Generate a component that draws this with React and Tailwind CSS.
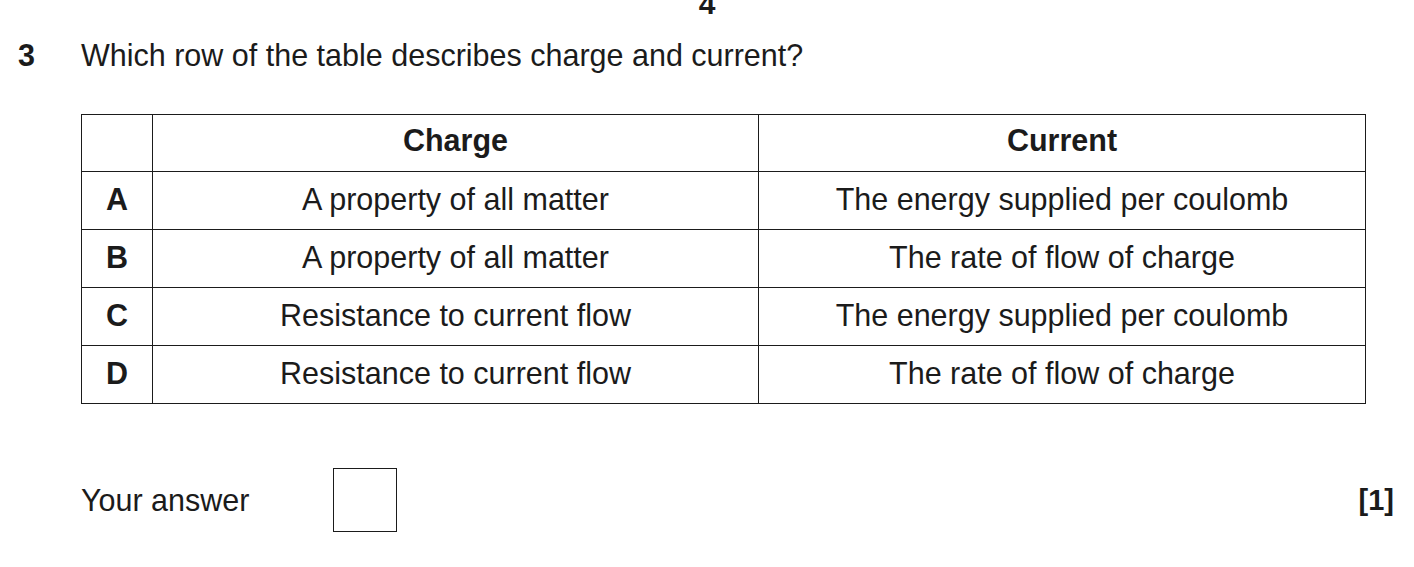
import React from 'react';

const rows = [
  { key: 'A', charge: 'A property of all matter', current: 'The energy supplied per coulomb' },
  { key: 'B', charge: 'A property of all matter', current: 'The rate of flow of charge' },
  { key: 'C', charge: 'Resistance to current flow', current: 'The energy supplied per coulomb' },
  { key: 'D', charge: 'Resistance to current flow', current: 'The rate of flow of charge' },
];

export default function App() {
  return (
    <div className="w-[1414px] h-[567px] overflow-hidden bg-white text-[#1b1b1b] font-['Liberation_Sans',Arial,sans-serif]">
      {/* page number */}
      <div className="h-[16px] flex justify-center">
        <span className="-mt-[13px] text-[30px] leading-[34px] font-bold">4</span>
      </div>

      {/* question */}
      <div className="flex items-baseline pt-[20px] text-[30.5px] leading-[38px]">
        <span className="w-[81px] pl-[18px] font-bold">3</span>
        <span>Which row of the table describes charge and current?</span>
      </div>

      {/* table */}
      <div className="pl-[81px] pt-[40px]">
        <table className="w-[1285px] border-collapse text-[30.5px] leading-none">
          <thead>
            <tr className="h-[57px]">
              <th className="w-[71px] border border-[#1b1b1b]"></th>
              <th className="w-[606px] pb-[5px] border border-[#1b1b1b] font-bold">Charge</th>
              <th className="pb-[5px] border border-[#1b1b1b] font-bold">Current</th>
            </tr>
          </thead>
          <tbody>
            {rows.map(r => (
              <tr key={r.key} className="h-[58px]">
                <td className="pb-[3px] border border-[#1b1b1b] text-center font-bold">{r.key}</td>
                <td className="pb-[3px] border border-[#1b1b1b] text-center">{r.charge}</td>
                <td className="pb-[3px] border border-[#1b1b1b] text-center">{r.current}</td>
              </tr>
            ))}
          </tbody>
        </table>
      </div>

      {/* answer */}
      <div className="flex items-center pl-[81px] pr-[20px] pt-[64px] text-[30.5px]">
        <span className="w-[252px] pt-[2px]">Your answer</span>
        <div className="w-[64px] h-[64px] border border-[#1b1b1b]"></div>
        <span className="ml-auto font-bold text-[29px] pt-[2px]">[1]</span>
      </div>
    </div>
  );
}
